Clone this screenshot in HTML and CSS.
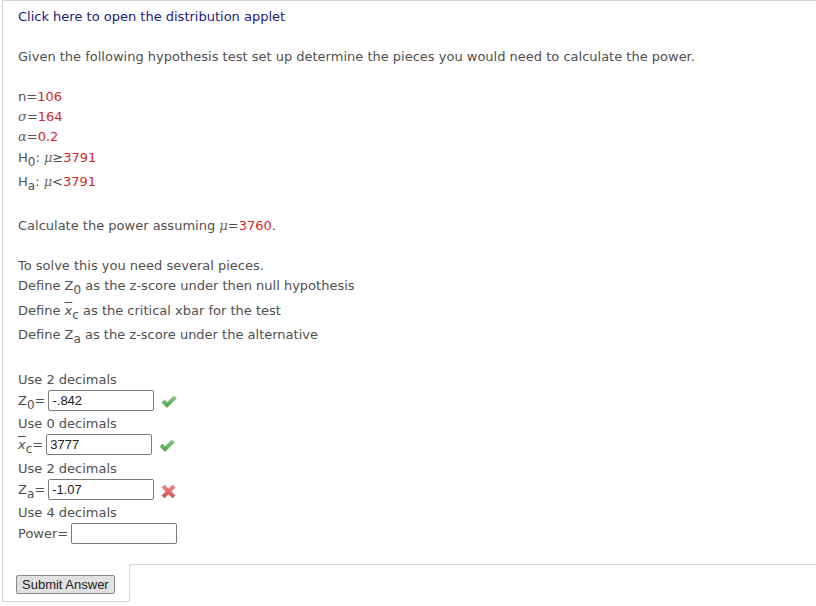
FILE: index.html
```html
<!DOCTYPE html>
<html>
<head>
<meta charset="utf-8">
<link rel="stylesheet" href="styles.css">
</head>
<body>
<div class="page">
  <div class="content">
    <div class="line link-line"><a class="applet-link" href="#">Click here to open the distribution applet</a></div>
    <div class="line gap20">Given the following hypothesis test set up determine the pieces you would need to calculate the power.</div>

    <div class="line gap20">n=<span class="val">106</span></div>
    <div class="line"><span class="math">σ</span>=<span class="val">164</span></div>
    <div class="line"><span class="math">α</span>=<span class="val">0.2</span></div>
    <div class="line h0">H<sub class="sub">0</sub>: <span class="math">μ</span>≥<span class="val">3791</span></div>
    <div class="line ha">H<sub class="sub">a</sub>: <span class="math">μ</span>&lt;<span class="val">3791</span></div>

    <div class="line calc">Calculate the power assuming <span class="math">μ</span>=<span class="val">3760</span>.</div>

    <div class="line gap20">To solve this you need several pieces.</div>
    <div class="line">Define Z<sub class="sub">0</sub> as the z-score under then null hypothesis</div>
    <div class="line def-x">Define <span class="xbar">x</span><sub class="sub">c</sub> as the critical xbar for the test</div>
    <div class="line def-a">Define Z<sub class="sub">a</sub> as the z-score under the alternative</div>

    <div class="line first-use">Use 2 decimals</div>
    <div class="row">
      <span class="lbl">Z<sub class="sub">0</sub>=</span>
      <input class="field" type="text" value="-.842">
      <svg class="mark" width="16" height="14" viewBox="0 0 16 14"><defs><linearGradient id="g1" x1="0" y1="0" x2="0" y2="1"><stop offset="0" stop-color="#8fd08a"/><stop offset="1" stop-color="#4a9f48"/></linearGradient></defs><path d="M1 7.5 L3.5 5 L6 7.8 L12.8 1 L15.2 3.4 L6 12.6 Z" fill="url(#g1)" stroke="#5a9e57" stroke-width="0.6"/></svg>
    </div>
    <div class="line use3">Use 0 decimals</div>
    <div class="row">
      <span class="lbl"><span class="xbar">x</span><sub class="sub">c</sub>=</span>
      <input class="field" type="text" value="3777">
      <svg class="mark" width="16" height="14" viewBox="0 0 16 14"><defs><linearGradient id="g2" x1="0" y1="0" x2="0" y2="1"><stop offset="0" stop-color="#8fd08a"/><stop offset="1" stop-color="#4a9f48"/></linearGradient></defs><path d="M1 7.5 L3.5 5 L6 7.8 L12.8 1 L15.2 3.4 L6 12.6 Z" fill="url(#g2)" stroke="#5a9e57" stroke-width="0.6"/></svg>
    </div>
    <div class="line use4">Use 2 decimals</div>
    <div class="row">
      <span class="lbl">Z<sub class="sub">a</sub>=</span>
      <input class="field" type="text" value="-1.07">
      <svg class="mark" width="15" height="15" viewBox="0 0 15 15"><defs><linearGradient id="r1" x1="0" y1="0" x2="0" y2="1"><stop offset="0" stop-color="#f08a8a"/><stop offset="1" stop-color="#d04848"/></linearGradient></defs><path d="M1 3.5 L3.5 1 L7.5 5 L11.5 1 L14 3.5 L10 7.5 L14 11.5 L11.5 14 L7.5 10 L3.5 14 L1 11.5 L5 7.5 Z" fill="url(#r1)" stroke="#c85555" stroke-width="0.5"/></svg>
    </div>
    <div class="line use3">Use 4 decimals</div>
    <div class="row">
      <span class="lbl">Power=</span>
      <input class="field" type="text" value="">
    </div>
  </div>
  <div class="footer">
    <div class="tab"><button class="submit" type="button">Submit Answer</button></div>
    <div class="rest"></div>
  </div>
</div>
</body>
</html>
```

FILE: styles.css
```css
html, body {
  margin: 0;
  padding: 0;
  background: #ffffff;
}
body {
  font-family: "DejaVu Sans", Verdana, sans-serif;
  font-size: 13px;
  color: #505050;
}
.page {
  margin-left: 2px;
  border-top: 1px solid #d6d6d6;
  border-left: 1px solid #d6d6d6;
}
.content {
  padding: 6px 0 0 15px;
  height: 558px;
  box-sizing: border-box;
}
.line {
  height: 20px;
  line-height: 20px;
  white-space: nowrap;
}
.applet-link {
  color: #21217a;
  text-decoration: none;
}
.gap20 { margin-top: 20px; }
.h0 { margin-top: 1px; }
.ha { margin-top: 4px; }
.calc { margin-top: 24px; }
.def-x { margin-top: 5px; }
.def-a { margin-top: 4px; }
.first-use { margin-top: 25px; }
.use3 { margin-top: 3px; }
.use4 { margin-top: 4px; }
.val { color: #cc2a2a; }
.math {
  font-style: italic;
  font-family: "DejaVu Serif", serif;
  color: #666;
}
.sub {
  font-size: 12px;
  line-height: 0;
  vertical-align: -4px;
}
.xbar {
  font-style: italic;
  text-decoration: overline;
}
.row {
  height: 21px;
  display: flex;
  align-items: center;
}
.lbl {
  line-height: 21px;
  margin-right: 3px;
  white-space: nowrap;
}
.field {
  width: 106px;
  height: 21px;
  box-sizing: border-box;
  border: 1px solid #7a7a7a;
  border-radius: 2px;
  padding: 0 3px;
  margin: 0;
  font-family: "Liberation Sans", Arial, sans-serif;
  font-size: 13px;
  color: #222;
  background: #fff;
}
.mark {
  margin-left: 7px;
  margin-top: 3px;
}
.footer {
  display: flex;
  height: 43px;
}
.tab {
  width: 128px;
  flex: none;
  border-left: 1px solid #d6d6d6;
  border-right: 1px solid #d6d6d6;
  border-bottom: 1px solid #d6d6d6;
  border-bottom-left-radius: 3px;
  border-bottom-right-radius: 3px;
  margin-left: -1px;
  padding: 11px 0 0 13px;
  box-sizing: border-box;
  height: 38px;
  margin-top: 5px;
}
.rest {
  flex: 1;
  border-top: 1px solid #d6d6d6;
  border-left: 1px solid #d6d6d6;
  border-top-left-radius: 3px;
  margin-top: 5px;
  margin-left: -1px;
  height: 20px;
}
.submit {
  font-family: "Liberation Sans", Arial, sans-serif;
  font-size: 13px;
  color: #222;
  background: #e1e1e1;
  border: 1px solid #8a8a8a;
  border-radius: 2px;
  padding: 0 5px;
  height: 19px;
  line-height: 17px;
  white-space: nowrap;
  margin: 0;
}
```
